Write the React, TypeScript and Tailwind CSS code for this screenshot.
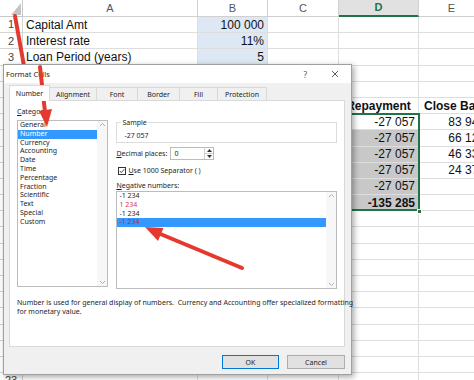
import React from 'react';

type RowData = { a?: string; b?: string; d?: string; e?: string };

const DATA: Record<number, RowData> = {
  1: { a: 'Capital Amt', b: '100 000' },
  2: { a: 'Interest rate', b: '11%' },
  3: { a: 'Loan Period (years)', b: '5' },
  7: { d: '-27 057', e: '83 943' },
  8: { d: '-27 057', e: '66 129' },
  9: { d: '-27 057', e: '46 332' },
  10: { d: '-27 057', e: '24 371' },
  11: { d: '-27 057' },
  12: { d: '-135 285' },
};

function SheetRow({ n }: { n: number }) {
  const r = DATA[n] || {};
  const grey = n >= 8 && n <= 12;
  return (
    <div className="flex h-[16.2px] shrink-0">
      <div className="w-[23px] shrink-0 border-r border-b border-[#d4d4d4] flex items-center justify-center text-[11px] text-[#444]">
        {n}
      </div>
      <div className="w-[175px] shrink-0 border-r border-b border-[#dedede] flex items-center pl-[3px] whitespace-nowrap">
        {r.a}
      </div>
      <div
        className={`w-[70px] shrink-0 border-r border-b border-[#dedede] flex items-center justify-end pr-[3px] whitespace-nowrap ${
          n <= 3 ? 'bg-[#dde8f4]' : ''
        }`}
      >
        {r.b}
      </div>
      <div className="w-[71px] shrink-0 border-r border-b border-[#dedede]" />
      {n === 6 ? (
        <div className="w-[80px] shrink-0 border-r border-b border-[#dedede] flex items-center justify-center font-bold whitespace-nowrap">
          Repayment
        </div>
      ) : (
        <div
          className={`w-[80px] shrink-0 border-r border-b border-[#dedede] flex items-center justify-end pr-[3px] whitespace-nowrap ${
            grey ? 'bg-[#c8c8c8]' : ''
          } ${n === 12 ? 'font-bold' : ''}`}
        >
          {r.d}
        </div>
      )}
      {n === 6 ? (
        <div className="w-[70px] shrink-0 border-r border-b border-[#dedede] flex items-center pl-[5px] font-bold whitespace-nowrap">
          Close Balance
        </div>
      ) : (
        <div className="w-[70px] shrink-0 border-r border-b border-[#dedede] flex items-center justify-end pr-[3px] whitespace-nowrap">
          {r.e}
        </div>
      )}
    </div>
  );
}

function Sheet() {
  const rows = Array.from({ length: 23 }, (_, i) => i + 1);
  return (
    <div className="flex flex-col text-[12px] text-[#111] font-['Liberation_Sans',Arial,sans-serif]">
      <div className="flex h-[17px] shrink-0">
        <div className="w-[23px] shrink-0 border-r border-b border-[#c8c8c8] relative">
          <svg width="23" height="17" className="absolute left-0 top-0">
            <polygon points="21,3 21,15 11,15" fill="#c4c4c4" />
          </svg>
        </div>
        <div className="w-[175px] shrink-0 border-r border-b border-[#d0d0d0] flex items-center justify-center text-[11px] text-[#555]">A</div>
        <div className="w-[70px] shrink-0 border-r border-b border-[#d0d0d0] flex items-center justify-center text-[11px] text-[#555]">B</div>
        <div className="w-[71px] shrink-0 border-r border-b border-[#d0d0d0] flex items-center justify-center text-[11px] text-[#555]">C</div>
        <div className="w-[80px] shrink-0 border-r border-[#d0d0d0] border-b-2 border-b-[#217346] bg-[#e1e1e1] flex items-center justify-center text-[11px] font-bold text-[#217346]">D</div>
        <div className="w-[66px] shrink-0 border-r border-b border-[#d0d0d0] flex items-center justify-center text-[11px] text-[#555]">E</div>
      </div>
      {rows.map((n) => (
        <SheetRow key={n} n={n} />
      ))}
    </div>
  );
}

function Chevron({ up }: { up?: boolean }) {
  return (
    <svg width="7" height="5" viewBox="0 0 7 5">
      <polyline
        points={up ? '1,4 3.5,1.5 6,4' : '1,1 3.5,3.5 6,1'}
        fill="none"
        stroke="#a6a6a6"
        strokeWidth="0.9"
      />
    </svg>
  );
}

function ScrollBar() {
  return (
    <div className="w-[10px] shrink-0 bg-[#f7f7f7] flex flex-col justify-between items-center py-[1px]">
      <Chevron up />
      <Chevron />
    </div>
  );
}

const CATS = ['General', 'Number', 'Currency', 'Accounting', 'Date', 'Time', 'Percentage', 'Fraction', 'Scientific', 'Text', 'Special', 'Custom'];

function Dialog() {
  return (
    <div className="absolute left-[3px] top-[64px] w-[349px] h-[311px] bg-[#f0f0f0] border border-[#a0a0a0] shadow-[2px_2px_6px_rgba(0,0,0,0.35)] flex flex-col font-['Noto_Sans',sans-serif] text-[7px] leading-[9px] text-[#1e1e1e]">
      {/* title bar */}
      <div className="h-[18px] shrink-0 bg-white flex items-center pl-[2px] pr-[12px]">
        <span className="text-[7.5px]">Format Cells</span>
        <span className="ml-auto text-[8px] text-[#555]">?</span>
        <svg width="8" height="8" viewBox="0 0 8 8" className="ml-[24px]">
          <path d="M1 1 L7 7 M7 1 L1 7" stroke="#333" strokeWidth="0.8" />
        </svg>
      </div>
      {/* tabs */}
      <div className="h-[17px] shrink-0 flex items-end pl-[5px]">
        <div className="w-[41px] h-[16px] bg-white border border-b-0 border-[#d9d9d9] flex items-center justify-center relative z-10 mb-[-1px]">
          Number
        </div>
        <div className="w-[47px] h-[13px] border-t border-r border-[#d9d9d9] flex items-center justify-center">Alignment</div>
        <div className="w-[41px] h-[13px] border-t border-r border-[#d9d9d9] flex items-center justify-center">Font</div>
        <div className="w-[42px] h-[13px] border-t border-r border-[#d9d9d9] flex items-center justify-center">Border</div>
        <div className="w-[38px] h-[13px] border-t border-r border-[#d9d9d9] flex items-center justify-center">Fill</div>
        <div className="w-[49px] h-[13px] border-t border-r border-[#d9d9d9] flex items-center justify-center">Protection</div>
      </div>
      {/* panel */}
      <div className="mx-[5px] w-[336px] h-[247px] shrink-0 bg-white border border-[#d9d9d9] flex flex-col px-[7px] pt-[6px]">
        <div className="flex gap-[8px]">
          {/* left column */}
          <div className="w-[92px] flex flex-col">
            <div className="h-[9px]">
              <span className="underline">C</span>ategory:
            </div>
            <div className="mt-[4px] h-[167px] border border-[#bcbcbc] flex">
              <div className="flex-1 flex flex-col">
                {CATS.map((c) => (
                  <div
                    key={c}
                    className={`h-[8.8px] leading-[8.8px] pl-[2px] ${c === 'Number' ? 'bg-[#3399ff] text-white' : ''}`}
                  >
                    {c}
                  </div>
                ))}
              </div>
              <ScrollBar />
            </div>
          </div>
          {/* right column */}
          <div className="w-[222px] flex flex-col">
            <div className="mt-[15px] h-[21px] border border-[#dcdcdc] relative flex items-end pl-[7px] pb-[2px]">
              <span className="absolute left-[4px] top-[-5px] bg-white px-[1px]">Sample</span>
              <span>-27 057</span>
            </div>
            <div className="mt-[4px] h-[13px] flex items-center">
              <div className="w-[54px]">
                <span className="underline">D</span>ecimal places:
              </div>
              <div className="w-[44px] h-[13px] border border-[#bcbcbc] flex items-center">
                <span className="pl-[3px] flex-1">0</span>
                <div className="w-[9px] h-full border-l border-[#d0d0d0] flex flex-col">
                  <div className="flex-1 flex items-center justify-center border-b border-[#d0d0d0]">
                    <svg width="5" height="3" viewBox="0 0 5 3"><polygon points="0,3 2.5,0 5,3" fill="#333" /></svg>
                  </div>
                  <div className="flex-1 flex items-center justify-center">
                    <svg width="5" height="3" viewBox="0 0 5 3"><polygon points="0,0 2.5,3 5,0" fill="#333" /></svg>
                  </div>
                </div>
              </div>
            </div>
            <div className="mt-[6px] h-[9px] flex items-center pl-[2px]">
              <div className="w-[8px] h-[8px] border border-[#333] flex items-center justify-center">
                <svg width="6" height="6" viewBox="0 0 6 6">
                  <polyline points="0.8,3 2.3,4.6 5.3,1.2" fill="none" stroke="#222" strokeWidth="0.8" />
                </svg>
              </div>
              <span className="ml-[2px]">
                <span className="underline">U</span>se 1000 Separator ( )
              </span>
            </div>
            <div className="mt-[6px] h-[9px]">
              <span className="underline">N</span>egative numbers:
            </div>
            <div className="mt-[1px] h-[98px] border border-[#bcbcbc] flex">
              <div className="flex-1 flex flex-col">
                <div className="h-[8.8px] leading-[8.8px] pl-[2px]">-1 234</div>
                <div className="h-[8.8px] leading-[8.8px] pl-[2px] text-[#e03a3a]">1 234</div>
                <div className="h-[8.8px] leading-[8.8px] pl-[2px]">-1 234</div>
                <div className="h-[8.8px] leading-[8.8px] pl-[2px] bg-[#3399ff] text-[#a0305a]">-1 234</div>
              </div>
              <ScrollBar />
            </div>
          </div>
        </div>
        <div className="mt-[9px] whitespace-pre">
          {'Number is used for general display of numbers.  Currency and Accounting offer specialized formatting\nfor monetary value.'}
        </div>
      </div>
      {/* buttons */}
      <div className="mt-[8px] flex justify-end gap-[8px] pr-[6px]">
        <div className="w-[57px] h-[14px] bg-[#e1e1e1] border border-[#0078d7] flex items-center justify-center">OK</div>
        <div className="w-[58px] h-[14px] bg-[#e1e1e1] border border-[#adadad] flex items-center justify-center">Cancel</div>
      </div>
    </div>
  );
}

export default function App() {
  return (
    <div className="relative w-[474px] h-[380px] overflow-hidden bg-white">
      <Sheet />
      {/* selection outline */}
      <div className="absolute left-[338px] top-[113.2px] w-[82px] h-[98.2px] border-2 border-[#217346]" />
      <div className="absolute left-[417px] top-[209px] w-[5px] h-[5px] bg-[#217346] border border-white" />
      {/* arrow 1 (behind dialog) */}
      <svg className="absolute left-0 top-0 pointer-events-none" width="474" height="380">
        <line x1="15" y1="16" x2="24" y2="66" stroke="#e5392f" strokeWidth="4" strokeLinecap="round" />
      </svg>
      <Dialog />
      {/* arrows over dialog */}
      <svg className="absolute left-0 top-0 pointer-events-none" width="474" height="380">
        <line x1="40" y1="67" x2="45" y2="112" stroke="#e5392f" strokeWidth="4" strokeLinecap="round" />
        <polygon points="47,127 52,109 39,111" fill="#e5392f" />
        <line x1="242" y1="268" x2="158" y2="233" stroke="#e5392f" strokeWidth="4" strokeLinecap="round" />
        <polygon points="145,227 163.5,228 158,241" fill="#e5392f" />
      </svg>
    </div>
  );
}
